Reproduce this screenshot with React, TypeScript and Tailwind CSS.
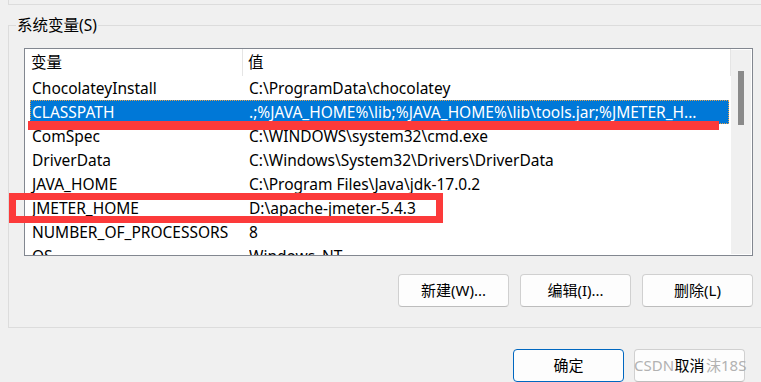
import React from "react";

const rows: [string, string][] = [
  ["ChocolateyInstall", "C:\\ProgramData\\chocolatey"],
  ["CLASSPATH", ".;%JAVA_HOME%\\lib;%JAVA_HOME%\\lib\\tools.jar;%JMETER_H..."],
  ["ComSpec", "C:\\WINDOWS\\system32\\cmd.exe"],
  ["DriverData", "C:\\Windows\\System32\\Drivers\\DriverData"],
  ["JAVA_HOME", "C:\\Program Files\\Java\\jdk-17.0.2"],
  ["JMETER_HOME", "D:\\apache-jmeter-5.4.3"],
  ["NUMBER_OF_PROCESSORS", "8"],
  ["OS", "Windows_NT"],
];

function Btn({ label, primary }: { label: string; primary?: boolean }) {
  return (
    <div
      className={
        "w-[111px] h-[33px] rounded-[4px] flex items-center justify-center bg-[#fdfdfd] text-[15px] text-black border " +
        (primary ? "border-[#0067c0]" : "border-[#d0d0d0] border-b-[#bdbdbd]")
      }
    >
      {label}
    </div>
  );
}

export default function App() {
  return (
    <div
      className="relative w-[761px] h-[382px] overflow-hidden bg-[#f0f0f0] text-black"
      style={{ fontFamily: '"Noto Sans", "Noto Sans CJK SC", sans-serif' }}
    >
      <div className="ml-[8px] h-[5px] border-l border-b border-[#dcdcdc]" />
      <div className="relative mt-[20px] ml-[8px] h-[303px] border border-r-0 border-[#dcdcdc]">
        <span className="absolute left-[7px] top-[-11px] bg-[#f0f0f0] px-[1px] text-[15.5px] leading-[20px]">
          系统变量(S)
        </span>
        <div className="ml-[15px] mt-[22px] w-[729px] h-[208px] border border-[#828790] bg-white flex overflow-hidden">
          <div className="flex-1 flex flex-col overflow-hidden">
            <div className="flex h-[27px] shrink-0 items-center text-[15.5px]">
              <div className="w-[218px] pl-[6px] h-full flex items-center border-r border-[#e5e5e5]">变量</div>
              <div className="flex-1 pl-[5px] h-full flex items-center border-r border-[#e5e5e5]">值</div>
            </div>
            {rows.map(([k, v], i) => {
              const sel = i === 1;
              return (
                <div
                  key={k}
                  className={
                    "flex shrink-0 h-[24px] ml-[5px] mr-[2px] pt-[1px] items-center text-[15.5px] whitespace-nowrap " +
                    (sel ? "bg-[#0078d7] text-white outline outline-1 outline-dotted outline-[#e0a050] -outline-offset-1" : "")
                  }
                >
                  <div className="w-[219px] pl-[2px] overflow-hidden">{k}</div>
                  <div className="flex-1 overflow-hidden">{v}</div>
                </div>
              );
            })}
          </div>
          <div className="w-[20px] mr-[1px] mt-[1px] mb-[1px] bg-[#f0f0f0] flex justify-center">
            <div className="mt-[21px] w-[6px] h-[54px] bg-[#8a8a8a]" />
          </div>
        </div>
        <div className="flex ml-[389px] mt-[18px] gap-[11px]">
          <Btn label="新建(W)..." />
          <Btn label="编辑(I)..." />
          <Btn label="删除(L)" />
        </div>
      </div>
      <div className="flex ml-[513px] mt-[21px] gap-[10px]">
        <Btn label="确定" primary />
        <div className="relative">
          <Btn label="取消" />
          <span className="absolute left-[0px] top-[6px] text-[15px] leading-[20px] text-[#a0a0a0] opacity-80 whitespace-nowrap">
            CSDN
          </span>
          <span className="absolute left-[72px] top-[6px] text-[15px] leading-[20px] text-[#a0a0a0] opacity-80 whitespace-nowrap">
            沫18S
          </span>
        </div>
      </div>
      {/* annotations */}
      <div className="absolute left-[28px] top-[121px] w-[691px] h-[9px] bg-[#fc3a3a]" />
      <div className="absolute left-[9px] top-[193px] w-[434px] h-[30px] border-[7px] border-[#fc3a3a]" />
    </div>
  );
}
